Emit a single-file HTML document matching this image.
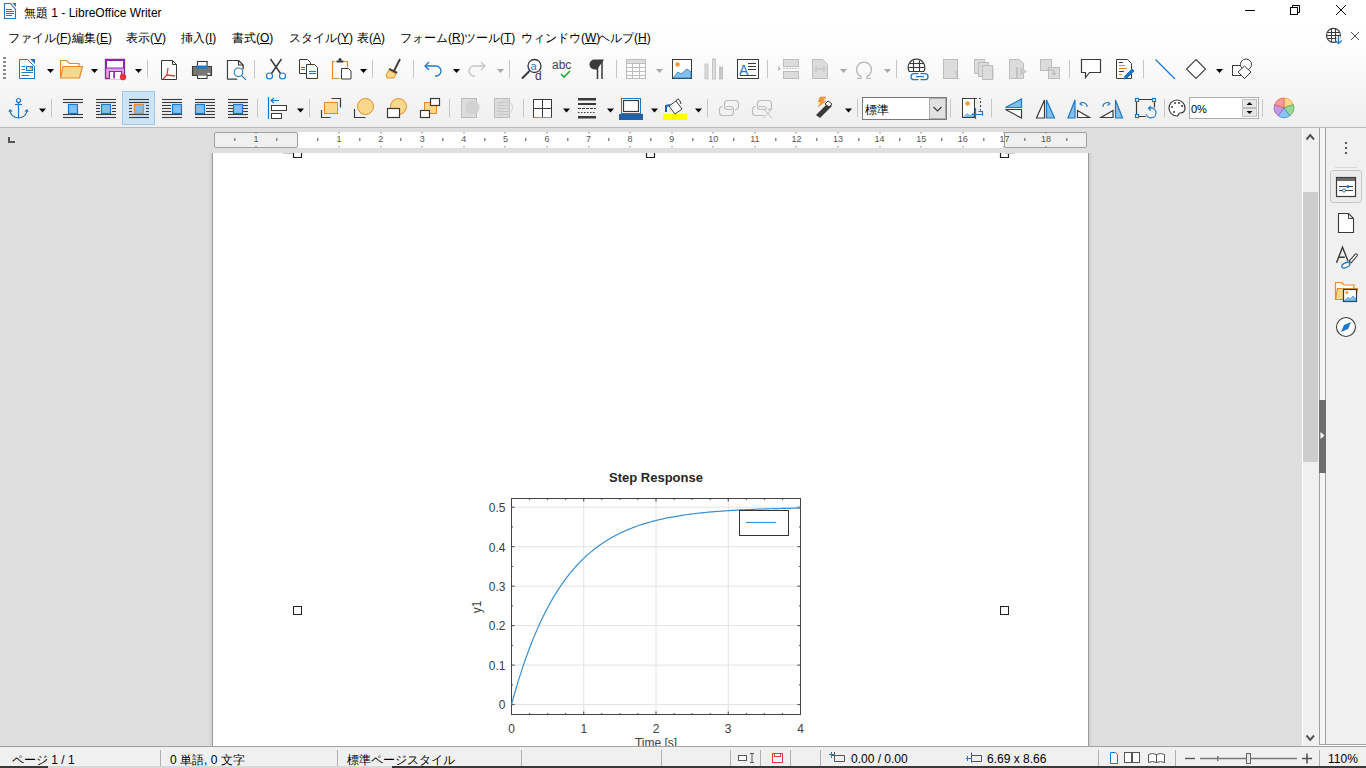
<!DOCTYPE html>
<html><head><meta charset="utf-8"><title>LibreOffice Writer</title>
<style>
html,body{margin:0;padding:0;width:1366px;height:768px;overflow:hidden;background:#fff;font-family:"Liberation Sans",sans-serif}
.bg{position:absolute}
u{text-decoration:underline;text-underline-offset:1px}
</style></head><body>
<div class="bg" style="left:0;top:0;width:1366px;height:24px;background:#fff"></div>
<div class="bg" style="left:0;top:24px;width:1366px;height:103px;background:linear-gradient(#ffffff 0px,#fdfdfd 26px,#efefef 103px)"></div>
<div class="bg" style="left:0;top:128px;width:1302px;height:618px;background:#dfdfdf"></div>
<svg width="1366" height="768" style="position:absolute;left:0;top:0" shape-rendering="geometricPrecision"><path d="M4.5,3.5 h6 l5,6 v9 h-11 z" fill="#fff" stroke="#1e78c8" stroke-width="1.1" /><path d="M12.3,3 h3.7 v4 z" fill="#1e78c8" /><line x1="6" y1="9.5" x2="12" y2="9.5" stroke="#1e78c8" stroke-width="1" /><line x1="6" y1="11.5" x2="14" y2="11.5" stroke="#1e78c8" stroke-width="1" /><line x1="6" y1="13.5" x2="14" y2="13.5" stroke="#1e78c8" stroke-width="1" /><line x1="6" y1="15.5" x2="12" y2="15.5" stroke="#1e78c8" stroke-width="1" /><line x1="1245" y1="10.5" x2="1255" y2="10.5" stroke="#000" stroke-width="1" /><rect x="1290.5" y="7.5" width="7" height="7" fill="none" stroke="#000" stroke-width="1" /><path d="M1292.5,7.5 v-2 h7 v7 h-2" fill="none" stroke="#000" stroke-width="1" /><line x1="1336" y1="5" x2="1346" y2="15" stroke="#000" stroke-width="1" /><line x1="1346" y1="5" x2="1336" y2="15" stroke="#000" stroke-width="1" /><circle cx="1333.5" cy="35.4" r="7" fill="none" stroke="#3a3a38" stroke-width="1.2"/><line x1="1331.5" y1="28.5" x2="1331.5" y2="42.5" stroke="#3a3a38" stroke-width="1" /><line x1="1335.5" y1="28.5" x2="1335.5" y2="42.5" stroke="#3a3a38" stroke-width="1" /><line x1="1327" y1="32.5" x2="1340" y2="32.5" stroke="#3a3a38" stroke-width="1" /><line x1="1326.5" y1="35.5" x2="1340.5" y2="35.5" stroke="#3a3a38" stroke-width="1" /><line x1="1327" y1="38.5" x2="1340" y2="38.5" stroke="#3a3a38" stroke-width="1" /><rect x="1336.5" y="36" width="4" height="8" fill="#fdfdfd" /><path d="M1338.5,36 v7.5 M1335.3,40.5 l3.2,3.2 l3.2,-3.2" fill="none" stroke="#1e78c8" stroke-width="1.3" /><line x1="1351" y1="32" x2="1359" y2="40" stroke="#555" stroke-width="1" /><line x1="1359" y1="32" x2="1351" y2="40" stroke="#555" stroke-width="1" /><rect x="3" y="57" width="3" height="2" fill="#8a8a8a" /><rect x="3" y="61" width="3" height="2" fill="#8a8a8a" /><rect x="3" y="65" width="3" height="2" fill="#8a8a8a" /><rect x="3" y="69" width="3" height="2" fill="#8a8a8a" /><rect x="3" y="73" width="3" height="2" fill="#8a8a8a" /><rect x="3" y="77" width="3" height="2" fill="#8a8a8a" /><path d="M19.5,59.5 h8 l7,7 v12 h-15 z" fill="#fff" stroke="#1e78c8" stroke-width="1" /><path d="M30,59 h5 v5 z" fill="#1e78c8" /><line x1="21.5" y1="66.5" x2="25" y2="66.5" stroke="#1e78c8" stroke-width="1" /><line x1="21.5" y1="69.5" x2="25" y2="69.5" stroke="#1e78c8" stroke-width="1" /><line x1="21.5" y1="72.5" x2="33" y2="72.5" stroke="#1e78c8" stroke-width="1" /><line x1="21.5" y1="75.5" x2="29" y2="75.5" stroke="#1e78c8" stroke-width="1" /><rect x="26.5" y="66.5" width="6" height="4" fill="#cfe3f5" stroke="#1e78c8" stroke-width="1" /><rect x="30" y="67" width="2" height="2" fill="#f39a3a" /><path d="M47.0,69 h7 l-3.5,4 z" fill="#000" /><path d="M60.5,78 v-17.5 h6 l3,3 h9.5 v3" fill="#fff" stroke="#e8892b" stroke-width="1.2" /><path d="M60.5,78 l2.5,-11.5 h19.5 l-3,11.5 z" fill="#f8d98c" stroke="#e8892b" stroke-width="1.2" /><path d="M91.0,69 h7 l-3.5,4 z" fill="#000" /><path d="M105.5,59.5 h19 v19 h-19 z" fill="#dca4e8" stroke="#8e24aa" stroke-width="1.3" /><rect x="106.5" y="60.5" width="17" height="7.5" fill="#fff" stroke="#8e24aa" stroke-width="1" /><path d="M109.5,79 v-7.5 h12 v7.5" fill="#fff" stroke="#8e24aa" stroke-width="1.2" /><rect x="113.3" y="72" width="1.6" height="6.5" fill="#8e24aa" /><circle cx="123" cy="77" r="3.2" fill="#e8323c"/><path d="M135.0,69 h7 l-3.5,4 z" fill="#000" /><rect x="147" y="60" width="1" height="18" fill="#c6c6c6" /><path d="M161.5,60.5 h11 l4,4 v15 h-15 z" fill="#fff" stroke="#3a3a38" stroke-width="1" /><path d="M172.5,60.5 v4 h4" fill="none" stroke="#3a3a38" stroke-width="1" /><path d="M168,68 l-1,7 l-4,4 m4,-4 l8,1" fill="none" stroke="#e03c3c" stroke-width="1.3" /><rect x="197.5" y="61.5" width="9.5" height="6" fill="#fff" stroke="#3a3a38" stroke-width="1.1" /><path d="M192.5,66.5 h19 v9 h-19 z" fill="#7a7773" stroke="#3a3a38" stroke-width="1.1" /><rect x="196.5" y="65" width="11" height="3.8" fill="#1e78c8" /><rect x="197" y="61.5" width="10.5" height="4" fill="#fff" /><path d="M197.5,65.5 v-4 h9.5 v4" fill="none" stroke="#3a3a38" stroke-width="1.1" /><rect x="207.5" y="73" width="2.5" height="1.5" fill="#fff" /><path d="M197.5,75.5 v3 h9.5 v-3" fill="#fff" stroke="#3a3a38" stroke-width="1.1" /><path d="M227.5,60.5 h11 l4.5,4.5 v4 M227.5,60.5 v18.5 h10" fill="#fff" stroke="#3a3a38" stroke-width="1.1" /><path d="M227.5,60.5 h11 l4.5,4.5 v14 h-15.5 z" fill="#fff" /><path d="M227.5,79 v-18.5 h11 l4.5,4.5 v4.5 M237,79 h-9.5" fill="none" stroke="#3a3a38" stroke-width="1.1" /><path d="M238.5,60.5 v4.5 h4.5" fill="none" stroke="#3a3a38" stroke-width="1.1" /><circle cx="238.5" cy="72.3" r="4.3" fill="none" stroke="#1e78c8" stroke-width="1.1"/><line x1="241.5" y1="75.5" x2="246" y2="79.8" stroke="#1e78c8" stroke-width="1.1" /><rect x="254" y="60" width="1" height="18" fill="#c6c6c6" /><line x1="270.5" y1="59" x2="280.5" y2="73.5" stroke="#3a3a38" stroke-width="1.5" /><line x1="281.5" y1="59" x2="271.5" y2="73.5" stroke="#3a3a38" stroke-width="1.5" /><circle cx="269.5" cy="76" r="3" fill="#fff" stroke="#1e78c8" stroke-width="1.2"/><circle cx="282.5" cy="76" r="3" fill="#fff" stroke="#1e78c8" stroke-width="1.2"/><path d="M299.5,59.5 h8 l3,3 v11 h-11 z" fill="#fff" stroke="#3a3a38" stroke-width="1" /><path d="M306.5,64.5 h8 l3,3 v11 h-11 z" fill="#fff" stroke="#3a3a38" stroke-width="1" /><line x1="301" y1="67.5" x2="305" y2="67.5" stroke="#1e78c8" stroke-width="1" /><line x1="301" y1="69.5" x2="305" y2="69.5" stroke="#1e78c8" stroke-width="1" /><line x1="309" y1="71.5" x2="316" y2="71.5" stroke="#1e78c8" stroke-width="1" /><line x1="309" y1="73.5" x2="316" y2="73.5" stroke="#1e78c8" stroke-width="1" /><path d="M335,61.5 h-2.5 v17 h7" fill="none" stroke="#e8892b" stroke-width="1.2" /><path d="M344,61.5 h3.5 v6" fill="none" stroke="#e8892b" stroke-width="1.2" /><rect x="336.5" y="60.5" width="7" height="2" fill="#3a3a38" /><circle cx="340" cy="59.5" r="1.5" fill="#3a3a38"/><path d="M341.5,68.5 h7 l2.5,2.5 v8 h-9.5 z" fill="#fff" stroke="#3a3a38" stroke-width="1" /><path d="M360.0,69 h7 l-3.5,4 z" fill="#000" /><rect x="372" y="60" width="1" height="18" fill="#c6c6c6" /><line x1="393" y1="73" x2="400" y2="59" stroke="#3a3a38" stroke-width="1.8" /><path d="M389,69 l8,4" fill="none" stroke="#3a3a38" stroke-width="2.5" /><path d="M386,75 l3,-5 l7,4 l-2,4 h-7 z" fill="#f8d98c" stroke="#e8892b" stroke-width="1" /><rect x="413" y="60" width="1" height="18" fill="#c6c6c6" /><path d="M425,66 h11 a5,5 0 0 1 0,10 h-1" fill="none" stroke="#1e78c8" stroke-width="1.3" /><path d="M429,62 l-4,4 l4,4" fill="none" stroke="#1e78c8" stroke-width="1.3" /><path d="M453.0,69 h7 l-3.5,4 z" fill="#000" /><path d="M485,66 h-11 a5,5 0 0 0 0,10 h1" fill="none" stroke="#c4c4c4" stroke-width="1.3" /><path d="M481,62 l4,4 l-4,4" fill="none" stroke="#c4c4c4" stroke-width="1.3" /><path d="M497.0,69 h7 l-3.5,4 z" fill="#a9a9a9" /><rect x="509" y="60" width="1" height="18" fill="#c6c6c6" /><circle cx="534.5" cy="66" r="6.5" fill="#fff" stroke="#3a3a38" stroke-width="1.3"/><line x1="529.5" y1="71" x2="522" y2="78.5" stroke="#3a3a38" stroke-width="2" /><path d="M561,74 l3,3 l6,-6" fill="none" stroke="#22a83c" stroke-width="1.6" /><path d="M597.5,60 v19 M602,60 v19" fill="none" stroke="#3a3a38" stroke-width="1.5" /><path d="M604,59.5 h-9.5 a5,5 0 0 0 0,10 h2.5 z" fill="#3a3a38" /><rect x="616" y="60" width="1" height="18" fill="#c6c6c6" /><rect x="626.5" y="59.5" width="19" height="19" fill="#fff" stroke="#bdbdbd" stroke-width="1" /><rect x="627" y="60" width="18" height="3" fill="#dcdcdc" /><line x1="627" y1="63.5" x2="645" y2="63.5" stroke="#bdbdbd" stroke-width="1" /><line x1="627" y1="67.5" x2="645" y2="67.5" stroke="#bdbdbd" stroke-width="1" /><line x1="627" y1="71.5" x2="645" y2="71.5" stroke="#bdbdbd" stroke-width="1" /><line x1="627" y1="75.5" x2="645" y2="75.5" stroke="#bdbdbd" stroke-width="1" /><line x1="632.5" y1="63" x2="632.5" y2="78" stroke="#bdbdbd" stroke-width="1" /><line x1="639.5" y1="63" x2="639.5" y2="78" stroke="#bdbdbd" stroke-width="1" /><path d="M656.0,69 h7 l-3.5,4 z" fill="#a9a9a9" /><rect x="672.5" y="59.5" width="19" height="19" fill="#fff" stroke="#3a3a38" stroke-width="1" /><circle cx="677.5" cy="64.5" r="2.3" fill="#f39a3a"/><path d="M673,78 l5,-6 l3,2 l6,-5 l4,3 v6 z" fill="#83beec" stroke="#1e78c8" stroke-width="0.8" /><rect x="705" y="64" width="3" height="15" fill="#dcdcdc" stroke="#bdbdbd" stroke-width="0.8" /><rect x="712.5" y="59" width="3" height="20" fill="#dcdcdc" stroke="#bdbdbd" stroke-width="0.8" /><rect x="719.5" y="67" width="3" height="12" fill="#c8c8c8" stroke="#bdbdbd" stroke-width="0.8" /><rect x="737.5" y="59.5" width="21" height="19" fill="#fff" stroke="#3a3a38" stroke-width="1" /><line x1="748" y1="63.5" x2="756" y2="63.5" stroke="#3a3a38" stroke-width="1" /><line x1="748" y1="66.5" x2="756" y2="66.5" stroke="#3a3a38" stroke-width="1" /><line x1="748" y1="69.5" x2="756" y2="69.5" stroke="#3a3a38" stroke-width="1" /><line x1="740" y1="75.5" x2="756" y2="75.5" stroke="#3a3a38" stroke-width="1" /><rect x="767" y="60" width="1" height="18" fill="#c6c6c6" /><rect x="783.5" y="59.5" width="15" height="7" fill="#dcdcdc" stroke="#bdbdbd" stroke-width="1" /><rect x="783.5" y="71.5" width="15" height="7" fill="#dcdcdc" stroke="#bdbdbd" stroke-width="1" /><path d="M778,66 l3,2.5 l-3,2.5 z" fill="#bdbdbd" /><line x1="783" y1="68.5" x2="799" y2="68.5" stroke="#bdbdbd" stroke-width="1" stroke-dasharray="2,1"/><path d="M812.5,59.5 h10 l5,5 v14 h-15 z" fill="#dcdcdc" stroke="#bdbdbd" stroke-width="1" /><path d="M816,66 v6 M824,66 v6 M817,69 h6" fill="none" stroke="#bdbdbd" stroke-width="1" /><path d="M840.0,69 h7 l-3.5,4 z" fill="#a9a9a9" /><path d="M857,78.5 h4 v-2 a7.5,7.5 0 1 1 6,0 v2 h4" fill="none" stroke="#b5b5b5" stroke-width="1.2" /><path d="M884.0,69 h7 l-3.5,4 z" fill="#a9a9a9" /><rect x="896" y="60" width="1" height="18" fill="#c6c6c6" /><path d="M909.3,71.5 A8.3,8.3 0 1 1 923.7,71.5 Z" fill="#fff" stroke="#3a3a38" stroke-width="1.2" /><line x1="913.5" y1="60.5" x2="913.5" y2="71.5" stroke="#3a3a38" stroke-width="1.1" /><line x1="919.5" y1="60.5" x2="919.5" y2="71.5" stroke="#3a3a38" stroke-width="1.1" /><line x1="909.5" y1="63.5" x2="923.5" y2="63.5" stroke="#3a3a38" stroke-width="1.1" /><line x1="908.5" y1="67.5" x2="924.5" y2="67.5" stroke="#3a3a38" stroke-width="1.1" /><path d="M918.5,73.7 h-4.5 a3,3 0 0 0 0,6 h4.5 M920.5,73.7 h4.5 a3,3 0 0 1 0,6 h-4.5 M916,76.7 h8" fill="none" stroke="#1e78c8" stroke-width="1.3" /><rect x="943.5" y="59.5" width="14" height="19" fill="#dcdcdc" stroke="#bdbdbd" stroke-width="1" /><rect x="974.5" y="59.5" width="10" height="14" fill="#dcdcdc" stroke="#bdbdbd" stroke-width="1" /><rect x="978.5" y="62.5" width="10" height="14" fill="#dcdcdc" stroke="#bdbdbd" stroke-width="1" /><rect x="982.5" y="65.5" width="10" height="14" fill="#dcdcdc" stroke="#bdbdbd" stroke-width="1" /><rect x="992" y="68" width="1.5" height="11" fill="#bdbdbd" /><path d="M1009.5,59.5 h10 l4,4 v15 h-14 z" fill="#dcdcdc" stroke="#bdbdbd" stroke-width="1" /><rect x="1016" y="67" width="2" height="12" fill="#c2c2c2" /><path d="M1020,67 l7,4.5 l-7,4.5 z" fill="#c8c8c8" /><rect x="1040.5" y="59.5" width="11" height="11" fill="#dcdcdc" stroke="#bdbdbd" stroke-width="1" /><rect x="1048.5" y="67.5" width="11" height="11" fill="#dcdcdc" stroke="#bdbdbd" stroke-width="1" /><path d="M1047,70 h7 v5 m-2,-2 l2,2 l2,-2" fill="none" stroke="#b0b0b0" stroke-width="1" /><rect x="1069" y="60" width="1" height="18" fill="#c6c6c6" /><path d="M1081.5,59.5 h19 v13 h-11 l-4,5 v-5 h-4 z" fill="#fff" stroke="#3a3a38" stroke-width="1.2" /><path d="M1116.5,59.5 h11 l4,4 v15 h-15 z" fill="#fff" stroke="#3a3a38" stroke-width="1" /><line x1="1119" y1="62.5" x2="1123" y2="62.5" stroke="#3a3a38" stroke-width="1" /><line x1="1119" y1="65.5" x2="1125" y2="65.5" stroke="#e8892b" stroke-width="1" /><line x1="1119" y1="68.5" x2="1127" y2="68.5" stroke="#e8892b" stroke-width="1" /><line x1="1119" y1="71.5" x2="1124" y2="71.5" stroke="#3a3a38" stroke-width="1" /><line x1="1119" y1="74.5" x2="1122" y2="74.5" stroke="#e8892b" stroke-width="1" /><path d="M1124,79 l1,-3 l7,-7 l2,2 l-7,7 z" fill="#1e78c8" stroke="#1e78c8" stroke-width="1" /><rect x="1143" y="60" width="1" height="18" fill="#c6c6c6" /><line x1="1155.5" y1="59.5" x2="1175" y2="79" stroke="#1e78c8" stroke-width="1.3" /><path d="M1196,59.5 l9.5,9.5 l-9.5,9.5 l-9.5,-9.5 z" fill="#fff" stroke="#4a4a4a" stroke-width="1.2" /><path d="M1216.0,69 h7 l-3.5,4 z" fill="#000" /><rect x="1232.5" y="65.5" width="11" height="10" fill="#fff" stroke="#3a3a38" stroke-width="1" /><circle cx="1246" cy="64.5" r="5.5" fill="#fff" stroke="#3a3a38"/><path d="M1244.5,66 l6.5,6 l-6.5,6.5 l-6.5,-6.5 z" fill="#fff" stroke="#3a3a38" stroke-width="1" /><circle cx="18.5" cy="100.5" r="2" fill="none" stroke="#1e78c8" stroke-width="1.2"/><line x1="18.5" y1="102.5" x2="18.5" y2="118" stroke="#1e78c8" stroke-width="1.2" /><line x1="15" y1="104.5" x2="22" y2="104.5" stroke="#1e78c8" stroke-width="1.2" /><path d="M10,111 q1,6 8.5,7 q7.5,-1 8.5,-7" fill="none" stroke="#1e78c8" stroke-width="1.2" /><path d="M9,112 l1,-2 l2,1.5 M28,112 l-1,-2 l-2,1.5" fill="none" stroke="#1e78c8" stroke-width="1.2" /><path d="M39.0,108.5 h7 l-3.5,4 z" fill="#000" /><rect x="51" y="99" width="1" height="18" fill="#c6c6c6" /><line x1="63" y1="99.5" x2="83" y2="99.5" stroke="#3a3a38" stroke-width="1.1" /><line x1="63" y1="102.5" x2="83" y2="102.5" stroke="#3a3a38" stroke-width="1.1" /><line x1="63" y1="114.5" x2="83" y2="114.5" stroke="#3a3a38" stroke-width="1.1" /><line x1="63" y1="117.5" x2="83" y2="117.5" stroke="#3a3a38" stroke-width="1.1" /><rect x="68.5" y="104.5" width="9" height="9" fill="#83beec" stroke="#1e78c8" stroke-width="1.2" /><line x1="96" y1="99.5" x2="116" y2="99.5" stroke="#3a3a38" stroke-width="1.1" /><line x1="96" y1="102.5" x2="116" y2="102.5" stroke="#3a3a38" stroke-width="1.1" /><line x1="96" y1="105.5" x2="100" y2="105.5" stroke="#3a3a38" stroke-width="1.1" /><line x1="112" y1="105.5" x2="116" y2="105.5" stroke="#3a3a38" stroke-width="1.1" /><line x1="96" y1="108.5" x2="100" y2="108.5" stroke="#3a3a38" stroke-width="1.1" /><line x1="112" y1="108.5" x2="116" y2="108.5" stroke="#3a3a38" stroke-width="1.1" /><line x1="96" y1="111.5" x2="100" y2="111.5" stroke="#3a3a38" stroke-width="1.1" /><line x1="112" y1="111.5" x2="116" y2="111.5" stroke="#3a3a38" stroke-width="1.1" /><line x1="96" y1="114.5" x2="116" y2="114.5" stroke="#3a3a38" stroke-width="1.1" /><line x1="96" y1="117.5" x2="116" y2="117.5" stroke="#3a3a38" stroke-width="1.1" /><rect x="101.5" y="104.5" width="9" height="9" fill="#83beec" stroke="#1e78c8" stroke-width="1.2" /><rect x="122.5" y="91.5" width="32" height="33" fill="#cce4f7" stroke="#99c9ef" stroke-width="1" /><line x1="129" y1="99.5" x2="149" y2="99.5" stroke="#3a3a38" stroke-width="1.1" /><line x1="129" y1="102.5" x2="149" y2="102.5" stroke="#3a3a38" stroke-width="1.1" /><line x1="129" y1="105.5" x2="132" y2="105.5" stroke="#3a3a38" stroke-width="1.1" /><line x1="146" y1="105.5" x2="149" y2="105.5" stroke="#3a3a38" stroke-width="1.1" /><line x1="129" y1="108.5" x2="132" y2="108.5" stroke="#3a3a38" stroke-width="1.1" /><line x1="146" y1="108.5" x2="149" y2="108.5" stroke="#3a3a38" stroke-width="1.1" /><line x1="129" y1="111.5" x2="132" y2="111.5" stroke="#3a3a38" stroke-width="1.1" /><line x1="146" y1="111.5" x2="149" y2="111.5" stroke="#3a3a38" stroke-width="1.1" /><line x1="129" y1="114.5" x2="149" y2="114.5" stroke="#3a3a38" stroke-width="1.1" /><line x1="129" y1="117.5" x2="149" y2="117.5" stroke="#3a3a38" stroke-width="1.1" /><rect x="134.5" y="104.5" width="9" height="9" fill="#83beec" stroke="#e8892b" stroke-width="1.2" /><line x1="162" y1="99.5" x2="182" y2="99.5" stroke="#3a3a38" stroke-width="1.1" /><line x1="162" y1="102.5" x2="182" y2="102.5" stroke="#3a3a38" stroke-width="1.1" /><line x1="162" y1="105.5" x2="171" y2="105.5" stroke="#3a3a38" stroke-width="1.1" /><line x1="162" y1="108.5" x2="171" y2="108.5" stroke="#3a3a38" stroke-width="1.1" /><line x1="162" y1="111.5" x2="171" y2="111.5" stroke="#3a3a38" stroke-width="1.1" /><line x1="162" y1="114.5" x2="182" y2="114.5" stroke="#3a3a38" stroke-width="1.1" /><line x1="162" y1="117.5" x2="182" y2="117.5" stroke="#3a3a38" stroke-width="1.1" /><rect x="172.5" y="104.5" width="9" height="9" fill="#83beec" stroke="#1e78c8" stroke-width="1.2" /><line x1="195" y1="99.5" x2="215" y2="99.5" stroke="#3a3a38" stroke-width="1.1" /><line x1="195" y1="102.5" x2="215" y2="102.5" stroke="#3a3a38" stroke-width="1.1" /><line x1="206" y1="105.5" x2="215" y2="105.5" stroke="#3a3a38" stroke-width="1.1" /><line x1="206" y1="108.5" x2="215" y2="108.5" stroke="#3a3a38" stroke-width="1.1" /><line x1="206" y1="111.5" x2="215" y2="111.5" stroke="#3a3a38" stroke-width="1.1" /><line x1="195" y1="114.5" x2="215" y2="114.5" stroke="#3a3a38" stroke-width="1.1" /><line x1="195" y1="117.5" x2="215" y2="117.5" stroke="#3a3a38" stroke-width="1.1" /><rect x="195.5" y="104.5" width="9" height="9" fill="#83beec" stroke="#1e78c8" stroke-width="1.2" /><line x1="228" y1="99.5" x2="248" y2="99.5" stroke="#3a3a38" stroke-width="1.1" /><line x1="228" y1="102.5" x2="248" y2="102.5" stroke="#3a3a38" stroke-width="1.1" /><line x1="228" y1="105.5" x2="248" y2="105.5" stroke="#3a3a38" stroke-width="1.1" /><line x1="228" y1="108.5" x2="248" y2="108.5" stroke="#3a3a38" stroke-width="1.1" /><line x1="228" y1="111.5" x2="248" y2="111.5" stroke="#3a3a38" stroke-width="1.1" /><line x1="228" y1="114.5" x2="248" y2="114.5" stroke="#3a3a38" stroke-width="1.1" /><line x1="228" y1="117.5" x2="248" y2="117.5" stroke="#3a3a38" stroke-width="1.1" /><rect x="233.5" y="104.5" width="9" height="9" fill="#83beec" stroke="#1e78c8" stroke-width="1.2" /><rect x="257" y="99" width="1" height="18" fill="#c6c6c6" /><line x1="268.5" y1="97" x2="268.5" y2="119" stroke="#1e78c8" stroke-width="1.2" /><path d="M271,100.5 h8 M274,98 l-3,2.5 l3,2.5" fill="none" stroke="#1e78c8" stroke-width="1.1" /><rect x="271.5" y="105.5" width="15" height="5" fill="#fff" stroke="#3a3a38" stroke-width="1" /><rect x="271.5" y="113.5" width="10" height="5" fill="#fff" stroke="#3a3a38" stroke-width="1" /><path d="M297.0,108.5 h7 l-3.5,4 z" fill="#000" /><rect x="309" y="99" width="1" height="18" fill="#c6c6c6" /><path d="M331.5,98.5 h9 v9" fill="none" stroke="#3a3a38" stroke-width="1.2" /><path d="M321.5,110 v7.5 h9" fill="none" stroke="#3a3a38" stroke-width="1.2" /><rect x="324.5" y="102.5" width="13" height="11" fill="#f8d98c" stroke="#e8892b" stroke-width="1" /><path d="M354.5,109 v8.5 h11" fill="none" stroke="#3a3a38" stroke-width="1.2" /><circle cx="365.5" cy="106.5" r="8" fill="#f8d98c" stroke="#e8892b"/><circle cx="398.5" cy="106.5" r="8" fill="#f8d98c" stroke="#e8892b"/><rect x="387.5" y="108.5" width="12" height="9" fill="#fff" stroke="#3a3a38" stroke-width="1.2" /><rect x="424.5" y="102.5" width="12" height="11" fill="#f8d98c" stroke="#e8892b" stroke-width="1" /><rect x="430.5" y="98.5" width="9" height="7" fill="#fff" stroke="#3a3a38" stroke-width="1.2" /><rect x="420.5" y="110.5" width="9" height="7" fill="#fff" stroke="#3a3a38" stroke-width="1.2" /><rect x="449" y="99" width="1" height="18" fill="#c6c6c6" /><rect x="461.5" y="98.5" width="15" height="19" fill="#dcdcdc" stroke="#bdbdbd" stroke-width="1" /><circle cx="472.5" cy="107.5" r="7" fill="#d2d2d2"/><rect x="494.5" y="98.5" width="15" height="19" fill="#dcdcdc" stroke="#bdbdbd" stroke-width="1" /><circle cx="505.5" cy="107.5" r="7" fill="none" stroke="#cfcfcf"/><line x1="497" y1="102.5" x2="510" y2="102.5" stroke="#c9c9c9" stroke-width="1" /><line x1="497" y1="105.5" x2="510" y2="105.5" stroke="#c9c9c9" stroke-width="1" /><line x1="497" y1="108.5" x2="510" y2="108.5" stroke="#c9c9c9" stroke-width="1" /><line x1="497" y1="111.5" x2="510" y2="111.5" stroke="#c9c9c9" stroke-width="1" /><line x1="497" y1="114.5" x2="510" y2="114.5" stroke="#c9c9c9" stroke-width="1" /><rect x="523" y="99" width="1" height="18" fill="#c6c6c6" /><rect x="533.5" y="99.5" width="18" height="18" fill="#fff" stroke="#3a3a38" stroke-width="1" /><line x1="542.5" y1="99.5" x2="542.5" y2="117.5" stroke="#3a3a38" stroke-width="1" /><line x1="533.5" y1="108.5" x2="551.5" y2="108.5" stroke="#3a3a38" stroke-width="1" /><line x1="533.5" y1="117.5" x2="551.5" y2="117.5" stroke="#e8892b" stroke-width="1.2" /><path d="M563.0,108.5 h7 l-3.5,4 z" fill="#000" /><rect x="578" y="98" width="18" height="2.5" fill="#3a3a38" /><rect x="578" y="103" width="18" height="2" fill="#3a3a38" /><line x1="578" y1="108.5" x2="596" y2="108.5" stroke="#3a3a38" stroke-width="1" stroke-dasharray="3,1"/><line x1="578" y1="112.5" x2="596" y2="112.5" stroke="#3a3a38" stroke-width="1" stroke-dasharray="1.5,1.5"/><rect x="578" y="116" width="18" height="2.5" fill="#3a3a38" /><path d="M607.0,108.5 h7 l-3.5,4 z" fill="#000" /><rect x="621.5" y="98.5" width="19" height="15" fill="#fff" stroke="#1e78c8" stroke-width="1" /><rect x="623.5" y="100.5" width="15" height="11" fill="#fff" stroke="#3a3a38" stroke-width="1.2" /><rect x="619" y="114" width="24" height="6" fill="#2a5f9e" /><path d="M651.0,108.5 h7 l-3.5,4 z" fill="#000" /><rect x="663" y="114" width="24" height="6" fill="#ffff00" /><path d="M669,106 l7,-5 l6,8 l-7,5 z" fill="#fff" stroke="#3a3a38" stroke-width="1" /><path d="M666,112 v-6 l4,-1" fill="none" stroke="#1e5fb0" stroke-width="2" /><path d="M676,101 q2,-4 4,0 l1,3" fill="none" stroke="#3a3a38" stroke-width="1" /><path d="M695.0,108.5 h7 l-3.5,4 z" fill="#000" /><rect x="707" y="99" width="1" height="18" fill="#c6c6c6" /><path d="M735,109.5 A3,3 0 0 0 738.5,106.5 V103.5 A3,3 0 0 0 735.5,100.5 H727.5 A3,3 0 0 0 724.5,103.5 V106.5 A3,3 0 0 0 727.5,109.5 H732.5" fill="none" stroke="#bdbdbd" stroke-width="1.2" /><path d="M726,106.5 H730.5 A3,3 0 0 1 733.5,109.5 V112.5 A3,3 0 0 1 730.5,115.5 H722.5 A3,3 0 0 1 719.5,112.5 V109.5 A3,3 0 0 1 722.5,106.5" fill="none" stroke="#bdbdbd" stroke-width="1.2" /><path d="M768,109.5 A3,3 0 0 0 771.5,106.5 V103.5 A3,3 0 0 0 768.5,100.5 H760.5 A3,3 0 0 0 757.5,103.5 V106.5 A3,3 0 0 0 760.5,109.5 H765.5" fill="none" stroke="#bdbdbd" stroke-width="1.2" /><path d="M759,106.5 H763.5 A3,3 0 0 1 766.5,109.5 M764,115.5 H755.5 A3,3 0 0 1 752.5,112.5 V109.5 A3,3 0 0 1 755.5,106.5" fill="none" stroke="#bdbdbd" stroke-width="1.2" /><line x1="763" y1="108.5" x2="772.5" y2="118.5" stroke="#bdbdbd" stroke-width="1" /><line x1="772.5" y1="108.5" x2="763" y2="118.5" stroke="#bdbdbd" stroke-width="1" /><path d="M816,115 l12,-12 l4,3 l-12,12 z" fill="#3a3a38" /><path d="M825,104 l3,-3 l4,3 l-3,3 z" fill="#fff" stroke="#3a3a38" stroke-width="1" /><path d="M820,97 h6 l-3,4 h3 l-8,6 l3,-5 h-3 z" fill="#f39a3a" stroke="#e8892b" stroke-width="0.5" /><path d="M845.0,108.5 h7 l-3.5,4 z" fill="#000" /><rect x="857" y="99" width="1" height="18" fill="#c6c6c6" /><rect x="862.5" y="97.5" width="84" height="22" fill="#fff" stroke="#7a7a7a" stroke-width="1" /><rect x="929.5" y="98.5" width="16" height="20" fill="#e1e1e1" stroke="#adadad" stroke-width="1" /><path d="M933.5,107 l4,4 l4,-4" fill="none" stroke="#3a3a3a" stroke-width="1.2" /><rect x="950" y="99" width="1" height="18" fill="#c6c6c6" /><rect x="962.5" y="98.5" width="12" height="19" fill="#fff" stroke="#3a3a38" stroke-width="1" /><path d="M975,98.5 h5.5 v12" fill="none" stroke="#3a3a38" stroke-width="1" stroke-dasharray="2,2"/><circle cx="967.5" cy="103.5" r="2.3" fill="#f39a3a"/><path d="M963,117 l4,-4 l3,2 l4,-3 v5 z" fill="#83beec" /><path d="M975.5,108 v11 M972,114.5 h11 M978.5,111.5 h4 v4" fill="none" stroke="#1e78c8" stroke-width="1.2" /><rect x="991" y="99" width="1" height="18" fill="#c6c6c6" /><path d="M1021.5,99 v8.5 h-16 z" fill="#83beec" stroke="#1e78c8" stroke-width="1.2" /><path d="M1021.5,118 v-8.5 h-16 z" fill="#fff" stroke="#3a3a38" stroke-width="1.2" /><path d="M1044.5,100 v18 h-8 z" fill="#fff" stroke="#3a3a38" stroke-width="1.2" /><path d="M1046.5,100 v18 h8 z" fill="#83beec" stroke="#1e78c8" stroke-width="1.2" /><path d="M1075,100 v18 h-7 z" fill="#83beec" stroke="#1e78c8" stroke-width="1.2" /><path d="M1077.5,117.5 v-7 l12,7 z" fill="#fff" stroke="#3a3a38" stroke-width="1.2" /><path d="M1080,104 a4,4 0 0 1 7,3 M1082,102 l-2,2 l2.5,1.5" fill="none" stroke="#1e78c8" stroke-width="1.1" /><path d="M1115.5,100 v18 h7 z" fill="#83beec" stroke="#1e78c8" stroke-width="1.2" /><path d="M1113,117.5 v-7 l-12,7 z" fill="#fff" stroke="#3a3a38" stroke-width="1.2" /><path d="M1110,104 a4,4 0 0 0 -7,3 M1108,102 l2,2 l-2.5,1.5" fill="none" stroke="#1e78c8" stroke-width="1.1" /><path d="M1145.75,116.5 h-9.25 v-17 h18 v8" fill="none" stroke="#3a3a38" stroke-width="1.2" /><rect x="1135.5" y="98.5" width="3" height="3" fill="#fff" stroke="#1e78c8" stroke-width="1.2" /><rect x="1152.5" y="98.5" width="3" height="3" fill="#fff" stroke="#1e78c8" stroke-width="1.2" /><rect x="1135.5" y="114.5" width="3" height="3" fill="#fff" stroke="#1e78c8" stroke-width="1.2" /><path d="M1146.2,114.1 A5,5 0 1 0 1151,107.8 L1148.5,108.3 M1150.8,105.8 L1148.5,108.3 L1150.8,110.8" fill="none" stroke="#1e78c8" stroke-width="1.2" /><rect x="1164" y="99" width="1" height="18" fill="#c6c6c6" /><path d="M1177,100 a8,8 0 1 0 0,16 c2,0 1,-3 3,-3 c3,0 5,-2 5,-5 a8,8 0 0 0 -8,-8 z" fill="#fff" stroke="#3a3a38" stroke-width="1.2" /><circle cx="1172" cy="107" r="1" fill="#3a3a38"/><circle cx="1175" cy="103" r="1" fill="#3a3a38"/><circle cx="1179" cy="103" r="1" fill="#3a3a38"/><circle cx="1182" cy="106" r="1" fill="#3a3a38"/><circle cx="1174" cy="112" r="1" fill="#3a3a38"/><rect x="1189.5" y="97.5" width="69" height="21" fill="#fff" stroke="#adadad" stroke-width="1" /><rect x="1242.5" y="99.5" width="14" height="8" fill="#e6e6e6" stroke="#c0c0c0" stroke-width="1" /><rect x="1242.5" y="108.5" width="14" height="8" fill="#e6e6e6" stroke="#c0c0c0" stroke-width="1" /><path d="M1246.5,105 l3,-3 l3,3 z" fill="#000" /><path d="M1246.5,111 l3,3 l3,-3 z" fill="#000" /><rect x="1262" y="99" width="1" height="18" fill="#c6c6c6" /><path d="M1284,107.8 L1284.00,98.00 A9.8,9.8 0 0 1 1293.32,104.77 z" fill="#f9d68a" stroke="#eaa940" stroke-width="0.8" /><path d="M1284,107.8 L1293.32,104.77 A9.8,9.8 0 0 1 1289.76,115.73 z" fill="#9ad89a" stroke="#4ca85a" stroke-width="0.8" /><path d="M1284,107.8 L1289.76,115.73 A9.8,9.8 0 0 1 1278.24,115.73 z" fill="#8cc2f0" stroke="#3a8ad8" stroke-width="0.8" /><path d="M1284,107.8 L1278.24,115.73 A9.8,9.8 0 0 1 1274.68,104.77 z" fill="#c59ae0" stroke="#9a5ac0" stroke-width="0.8" /><path d="M1284,107.8 L1274.68,104.77 A9.8,9.8 0 0 1 1284.00,98.00 z" fill="#f39a9a" stroke="#e86060" stroke-width="0.8" /><rect x="0" y="127" width="1366" height="1" fill="#b9b9b9" /><rect x="297" y="132" width="708" height="16" fill="#fff" /><rect x="214.5" y="132.5" width="83" height="15" fill="#f0f0f0" stroke="#a0a0a0" stroke-width="1" rx="1.5"/><rect x="1004.5" y="132.5" width="82" height="15" fill="#f0f0f0" stroke="#a0a0a0" stroke-width="1" rx="1.5"/><rect x="234" y="138" width="1.5" height="3" fill="#888" /><rect x="255.5" y="132" width="1" height="1.5" fill="#777" /><rect x="255.5" y="146" width="1" height="1.5" fill="#777" /><rect x="276" y="138" width="1.5" height="3" fill="#888" /><rect x="317" y="138" width="1.5" height="3" fill="#888" /><rect x="338.5" y="132" width="1" height="1.5" fill="#777" /><rect x="338.5" y="146" width="1" height="1.5" fill="#777" /><rect x="359" y="138" width="1.5" height="3" fill="#888" /><rect x="380.5" y="132" width="1" height="1.5" fill="#777" /><rect x="380.5" y="146" width="1" height="1.5" fill="#777" /><rect x="400" y="138" width="1.5" height="3" fill="#888" /><rect x="421.5" y="132" width="1" height="1.5" fill="#777" /><rect x="421.5" y="146" width="1" height="1.5" fill="#777" /><rect x="442" y="138" width="1.5" height="3" fill="#888" /><rect x="463.5" y="132" width="1" height="1.5" fill="#777" /><rect x="463.5" y="146" width="1" height="1.5" fill="#777" /><rect x="484" y="138" width="1.5" height="3" fill="#888" /><rect x="504.5" y="132" width="1" height="1.5" fill="#777" /><rect x="504.5" y="146" width="1" height="1.5" fill="#777" /><rect x="525" y="138" width="1.5" height="3" fill="#888" /><rect x="546.5" y="132" width="1" height="1.5" fill="#777" /><rect x="546.5" y="146" width="1" height="1.5" fill="#777" /><rect x="567" y="138" width="1.5" height="3" fill="#888" /><rect x="588.5" y="132" width="1" height="1.5" fill="#777" /><rect x="588.5" y="146" width="1" height="1.5" fill="#777" /><rect x="608" y="138" width="1.5" height="3" fill="#888" /><rect x="629.5" y="132" width="1" height="1.5" fill="#777" /><rect x="629.5" y="146" width="1" height="1.5" fill="#777" /><rect x="650" y="138" width="1.5" height="3" fill="#888" /><rect x="671.5" y="132" width="1" height="1.5" fill="#777" /><rect x="671.5" y="146" width="1" height="1.5" fill="#777" /><rect x="692" y="138" width="1.5" height="3" fill="#888" /><rect x="712.5" y="132" width="1" height="1.5" fill="#777" /><rect x="712.5" y="146" width="1" height="1.5" fill="#777" /><rect x="733" y="138" width="1.5" height="3" fill="#888" /><rect x="754.5" y="132" width="1" height="1.5" fill="#777" /><rect x="754.5" y="146" width="1" height="1.5" fill="#777" /><rect x="775" y="138" width="1.5" height="3" fill="#888" /><rect x="795.5" y="132" width="1" height="1.5" fill="#777" /><rect x="795.5" y="146" width="1" height="1.5" fill="#777" /><rect x="816" y="138" width="1.5" height="3" fill="#888" /><rect x="837.5" y="132" width="1" height="1.5" fill="#777" /><rect x="837.5" y="146" width="1" height="1.5" fill="#777" /><rect x="858" y="138" width="1.5" height="3" fill="#888" /><rect x="879.5" y="132" width="1" height="1.5" fill="#777" /><rect x="879.5" y="146" width="1" height="1.5" fill="#777" /><rect x="899" y="138" width="1.5" height="3" fill="#888" /><rect x="920.5" y="132" width="1" height="1.5" fill="#777" /><rect x="920.5" y="146" width="1" height="1.5" fill="#777" /><rect x="941" y="138" width="1.5" height="3" fill="#888" /><rect x="962.5" y="132" width="1" height="1.5" fill="#777" /><rect x="962.5" y="146" width="1" height="1.5" fill="#777" /><rect x="983" y="138" width="1.5" height="3" fill="#888" /><rect x="1003.5" y="132" width="1" height="1.5" fill="#777" /><rect x="1003.5" y="146" width="1" height="1.5" fill="#777" /><rect x="1024" y="138" width="1.5" height="3" fill="#888" /><rect x="1045.5" y="132" width="1" height="1.5" fill="#777" /><rect x="1045.5" y="146" width="1" height="1.5" fill="#777" /><rect x="1066" y="138" width="1.5" height="3" fill="#888" /><path d="M9,137 v5 h6" fill="none" stroke="#555" stroke-width="2" /><defs><linearGradient id="shl" x1="0" x2="1"><stop offset="0" stop-color="#dfdfdf"/><stop offset="1" stop-color="#cfcfcf"/></linearGradient><linearGradient id="shr" x1="0" x2="1"><stop offset="0" stop-color="#cfcfcf"/><stop offset="1" stop-color="#dfdfdf"/></linearGradient></defs><rect x="208" y="153" width="4" height="593" fill="url(#shl)" /><rect x="212" y="153" width="1" height="593" fill="#9a9a9a" /><rect x="213" y="153" width="875" height="593" fill="#fff" /><rect x="1088" y="153" width="1" height="593" fill="#9a9a9a" /><rect x="1089" y="153" width="4" height="593" fill="url(#shr)" /><path d="M293.5,153 v4.5 h8 v-4.5" fill="none" stroke="#222" stroke-width="1.2" /><path d="M646.5,153 v4.5 h8 v-4.5" fill="none" stroke="#222" stroke-width="1.2" /><path d="M1000.5,153 v4.5 h8 v-4.5" fill="none" stroke="#222" stroke-width="1.2" /><rect x="293.5" y="606.5" width="8" height="8" fill="#fff" stroke="#222" stroke-width="1" /><rect x="1000.5" y="606.5" width="8" height="8" fill="#fff" stroke="#222" stroke-width="1" /><rect x="283" y="153" width="10" height="1" fill="#c8c8c8" /><rect x="1005" y="153" width="10" height="1" fill="#c8c8c8" /><line x1="583.75" y1="498.5" x2="583.75" y2="714.5" stroke="#e2e2e2" stroke-width="1" /><line x1="656.0" y1="498.5" x2="656.0" y2="714.5" stroke="#e2e2e2" stroke-width="1" /><line x1="728.25" y1="498.5" x2="728.25" y2="714.5" stroke="#e2e2e2" stroke-width="1" /><line x1="511.5" y1="704.6" x2="800.5" y2="704.6" stroke="#e2e2e2" stroke-width="1" /><line x1="511.5" y1="665.12" x2="800.5" y2="665.12" stroke="#e2e2e2" stroke-width="1" /><line x1="511.5" y1="625.64" x2="800.5" y2="625.64" stroke="#e2e2e2" stroke-width="1" /><line x1="511.5" y1="586.16" x2="800.5" y2="586.16" stroke="#e2e2e2" stroke-width="1" /><line x1="511.5" y1="546.68" x2="800.5" y2="546.68" stroke="#e2e2e2" stroke-width="1" /><line x1="511.5" y1="507.2" x2="800.5" y2="507.2" stroke="#e2e2e2" stroke-width="1" /><rect x="511.5" y="498.5" width="289.0" height="216.0" fill="none" stroke="#444" stroke-width="1" /><line x1="511.5" y1="714.5" x2="511.5" y2="711.5" stroke="#444" stroke-width="1" /><line x1="511.5" y1="498.5" x2="511.5" y2="501.5" stroke="#444" stroke-width="1" /><line x1="529.5625" y1="714.5" x2="529.5625" y2="713.0" stroke="#444" stroke-width="1" /><line x1="529.5625" y1="498.5" x2="529.5625" y2="500.0" stroke="#444" stroke-width="1" /><line x1="547.625" y1="714.5" x2="547.625" y2="713.0" stroke="#444" stroke-width="1" /><line x1="547.625" y1="498.5" x2="547.625" y2="500.0" stroke="#444" stroke-width="1" /><line x1="565.6875" y1="714.5" x2="565.6875" y2="713.0" stroke="#444" stroke-width="1" /><line x1="565.6875" y1="498.5" x2="565.6875" y2="500.0" stroke="#444" stroke-width="1" /><line x1="583.75" y1="714.5" x2="583.75" y2="711.5" stroke="#444" stroke-width="1" /><line x1="583.75" y1="498.5" x2="583.75" y2="501.5" stroke="#444" stroke-width="1" /><line x1="601.8125" y1="714.5" x2="601.8125" y2="713.0" stroke="#444" stroke-width="1" /><line x1="601.8125" y1="498.5" x2="601.8125" y2="500.0" stroke="#444" stroke-width="1" /><line x1="619.875" y1="714.5" x2="619.875" y2="713.0" stroke="#444" stroke-width="1" /><line x1="619.875" y1="498.5" x2="619.875" y2="500.0" stroke="#444" stroke-width="1" /><line x1="637.9375" y1="714.5" x2="637.9375" y2="713.0" stroke="#444" stroke-width="1" /><line x1="637.9375" y1="498.5" x2="637.9375" y2="500.0" stroke="#444" stroke-width="1" /><line x1="656.0" y1="714.5" x2="656.0" y2="711.5" stroke="#444" stroke-width="1" /><line x1="656.0" y1="498.5" x2="656.0" y2="501.5" stroke="#444" stroke-width="1" /><line x1="674.0625" y1="714.5" x2="674.0625" y2="713.0" stroke="#444" stroke-width="1" /><line x1="674.0625" y1="498.5" x2="674.0625" y2="500.0" stroke="#444" stroke-width="1" /><line x1="692.125" y1="714.5" x2="692.125" y2="713.0" stroke="#444" stroke-width="1" /><line x1="692.125" y1="498.5" x2="692.125" y2="500.0" stroke="#444" stroke-width="1" /><line x1="710.1875" y1="714.5" x2="710.1875" y2="713.0" stroke="#444" stroke-width="1" /><line x1="710.1875" y1="498.5" x2="710.1875" y2="500.0" stroke="#444" stroke-width="1" /><line x1="728.25" y1="714.5" x2="728.25" y2="711.5" stroke="#444" stroke-width="1" /><line x1="728.25" y1="498.5" x2="728.25" y2="501.5" stroke="#444" stroke-width="1" /><line x1="746.3125" y1="714.5" x2="746.3125" y2="713.0" stroke="#444" stroke-width="1" /><line x1="746.3125" y1="498.5" x2="746.3125" y2="500.0" stroke="#444" stroke-width="1" /><line x1="764.375" y1="714.5" x2="764.375" y2="713.0" stroke="#444" stroke-width="1" /><line x1="764.375" y1="498.5" x2="764.375" y2="500.0" stroke="#444" stroke-width="1" /><line x1="782.4375" y1="714.5" x2="782.4375" y2="713.0" stroke="#444" stroke-width="1" /><line x1="782.4375" y1="498.5" x2="782.4375" y2="500.0" stroke="#444" stroke-width="1" /><line x1="800.5" y1="714.5" x2="800.5" y2="711.5" stroke="#444" stroke-width="1" /><line x1="800.5" y1="498.5" x2="800.5" y2="501.5" stroke="#444" stroke-width="1" /><line x1="511.5" y1="704.6" x2="514.5" y2="704.6" stroke="#444" stroke-width="1" /><line x1="800.5" y1="704.6" x2="797.5" y2="704.6" stroke="#444" stroke-width="1" /><line x1="511.5" y1="684.86" x2="513.0" y2="684.86" stroke="#444" stroke-width="1" /><line x1="800.5" y1="684.86" x2="799.0" y2="684.86" stroke="#444" stroke-width="1" /><line x1="511.5" y1="665.12" x2="514.5" y2="665.12" stroke="#444" stroke-width="1" /><line x1="800.5" y1="665.12" x2="797.5" y2="665.12" stroke="#444" stroke-width="1" /><line x1="511.5" y1="645.38" x2="513.0" y2="645.38" stroke="#444" stroke-width="1" /><line x1="800.5" y1="645.38" x2="799.0" y2="645.38" stroke="#444" stroke-width="1" /><line x1="511.5" y1="625.64" x2="514.5" y2="625.64" stroke="#444" stroke-width="1" /><line x1="800.5" y1="625.64" x2="797.5" y2="625.64" stroke="#444" stroke-width="1" /><line x1="511.5" y1="605.9" x2="513.0" y2="605.9" stroke="#444" stroke-width="1" /><line x1="800.5" y1="605.9" x2="799.0" y2="605.9" stroke="#444" stroke-width="1" /><line x1="511.5" y1="586.16" x2="514.5" y2="586.16" stroke="#444" stroke-width="1" /><line x1="800.5" y1="586.16" x2="797.5" y2="586.16" stroke="#444" stroke-width="1" /><line x1="511.5" y1="566.42" x2="513.0" y2="566.42" stroke="#444" stroke-width="1" /><line x1="800.5" y1="566.42" x2="799.0" y2="566.42" stroke="#444" stroke-width="1" /><line x1="511.5" y1="546.68" x2="514.5" y2="546.68" stroke="#444" stroke-width="1" /><line x1="800.5" y1="546.68" x2="797.5" y2="546.68" stroke="#444" stroke-width="1" /><line x1="511.5" y1="526.94" x2="513.0" y2="526.94" stroke="#444" stroke-width="1" /><line x1="800.5" y1="526.94" x2="799.0" y2="526.94" stroke="#444" stroke-width="1" /><line x1="511.5" y1="507.2" x2="514.5" y2="507.2" stroke="#444" stroke-width="1" /><line x1="800.5" y1="507.2" x2="797.5" y2="507.2" stroke="#444" stroke-width="1" /><polyline points="511.50,704.60 512.95,699.34 514.39,694.22 515.84,689.24 517.28,684.39 518.73,679.67 520.17,675.08 521.62,670.61 523.06,666.25 524.50,662.02 525.95,657.89 527.39,653.88 528.84,649.97 530.28,646.17 531.73,642.46 533.17,638.86 534.62,635.35 536.07,631.94 537.51,628.62 538.96,625.38 540.40,622.23 541.85,619.17 543.29,616.19 544.74,613.28 546.18,610.46 547.62,607.71 549.07,605.03 550.51,602.42 551.96,599.89 553.40,597.42 554.85,595.01 556.29,592.68 557.74,590.40 559.18,588.18 560.63,586.03 562.08,583.93 563.52,581.88 564.97,579.89 566.41,577.96 567.86,576.07 569.30,574.24 570.75,572.45 572.19,570.71 573.63,569.02 575.08,567.37 576.52,565.77 577.97,564.21 579.41,562.69 580.86,561.21 582.30,559.77 583.75,558.37 585.20,557.01 586.64,555.68 588.09,554.39 589.53,553.14 590.98,551.91 592.42,550.72 593.87,549.56 595.31,548.43 596.75,547.33 598.20,546.27 599.64,545.22 601.09,544.21 602.53,543.23 603.98,542.27 605.42,541.33 606.87,540.42 608.32,539.54 609.76,538.68 611.21,537.84 612.65,537.02 614.10,536.23 615.54,535.45 616.99,534.70 618.43,533.97 619.88,533.26 621.32,532.56 622.76,531.89 624.21,531.23 625.65,530.59 627.10,529.97 628.54,529.36 629.99,528.77 631.43,528.19 632.88,527.63 634.33,527.09 635.77,526.56 637.22,526.04 638.66,525.54 640.11,525.05 641.55,524.58 643.00,524.12 644.44,523.66 645.88,523.23 647.33,522.80 648.77,522.38 650.22,521.98 651.66,521.59 653.11,521.20 654.56,520.83 656.00,520.47 657.44,520.11 658.89,519.77 660.34,519.43 661.78,519.11 663.23,518.79 664.67,518.48 666.12,518.18 667.56,517.89 669.00,517.60 670.45,517.33 671.89,517.06 673.34,516.79 674.78,516.54 676.23,516.29 677.67,516.05 679.12,515.81 680.57,515.58 682.01,515.36 683.45,515.14 684.90,514.93 686.35,514.73 687.79,514.52 689.24,514.33 690.68,514.14 692.12,513.95 693.57,513.77 695.01,513.60 696.46,513.43 697.90,513.26 699.35,513.10 700.80,512.94 702.24,512.79 703.68,512.64 705.13,512.50 706.58,512.36 708.02,512.22 709.47,512.09 710.91,511.96 712.36,511.83 713.80,511.71 715.25,511.59 716.69,511.47 718.13,511.35 719.58,511.24 721.02,511.14 722.47,511.03 723.91,510.93 725.36,510.83 726.81,510.73 728.25,510.64 729.69,510.55 731.14,510.46 732.59,510.37 734.03,510.29 735.48,510.20 736.92,510.12 738.37,510.05 739.81,509.97 741.25,509.90 742.70,509.83 744.14,509.76 745.59,509.69 747.03,509.62 748.48,509.56 749.92,509.49 751.37,509.43 752.82,509.37 754.26,509.32 755.70,509.26 757.15,509.20 758.60,509.15 760.04,509.10 761.49,509.05 762.93,509.00 764.38,508.95 765.82,508.90 767.26,508.86 768.71,508.81 770.15,508.77 771.60,508.73 773.05,508.69 774.49,508.65 775.93,508.61 777.38,508.57 778.83,508.54 780.27,508.50 781.72,508.47 783.16,508.43 784.61,508.40 786.05,508.37 787.50,508.34 788.94,508.31 790.38,508.28 791.83,508.25 793.27,508.22 794.72,508.19 796.16,508.17 797.61,508.14 799.06,508.12 800.50,508.09" fill="none" stroke="#3b8fd0" stroke-width="1.2"/><rect x="739.5" y="510.5" width="49" height="25" fill="#fff" stroke="#333" stroke-width="1" /><line x1="746" y1="522.5" x2="776" y2="522.5" stroke="#3b8fd0" stroke-width="1.2" /><rect x="1302" y="128" width="1" height="618" fill="#ffffff" /><rect x="1303" y="128" width="16" height="618" fill="#f0f0f0" /><path d="M1306.5,139.5 l3.75,-4.5 l3.75,4.5" fill="none" stroke="#555" stroke-width="2" /><path d="M1306.5,735.5 l3.75,4.5 l3.75,-4.5" fill="none" stroke="#555" stroke-width="2" /><rect x="1303" y="192" width="15" height="270" fill="#cdcdcd" /><rect x="1319" y="128" width="1" height="617" fill="#a0a0a0" /><rect x="1320" y="128" width="5" height="617" fill="#f5f5f5" /><rect x="1325" y="128" width="1" height="617" fill="#a0a0a0" /><rect x="1326" y="128" width="40" height="617" fill="#f0f0f0" /><rect x="1319" y="744" width="47" height="1" fill="#a0a0a0" /><rect x="1319" y="400" width="7" height="73" fill="#6e6e6e" /><path d="M1320.5,432 l4,3.5 l-4,3.5 z" fill="#fff" /><rect x="1345" y="142" width="2" height="2" fill="#555" /><rect x="1345" y="147" width="2" height="2" fill="#555" /><rect x="1345" y="152" width="2" height="2" fill="#555" /><rect x="1335" y="167" width="22" height="1" fill="#d8d8d8" /><rect x="1330.5" y="170.5" width="31" height="32" fill="#ececec" stroke="#c4c4c4" stroke-width="1" rx="3"/><rect x="1336.5" y="177.5" width="19" height="19" fill="#fff" stroke="#3a3a38" stroke-width="1.2" /><rect x="1337" y="178" width="18" height="3" fill="#6a6a6a" /><line x1="1339" y1="186.5" x2="1353" y2="186.5" stroke="#3a3a38" stroke-width="1" /><line x1="1339" y1="190.5" x2="1353" y2="190.5" stroke="#3a3a38" stroke-width="1" /><circle cx="1348" cy="186.5" r="1.6" fill="#1e78c8"/><circle cx="1344" cy="190.5" r="1.6" fill="#fff" stroke="#1e78c8"/><path d="M1338.5,213.5 h10 l5,5 v14 h-15 z" fill="#fff" stroke="#3a3a38" stroke-width="1.1" /><path d="M1348.5,213.5 v5 h5" fill="none" stroke="#3a3a38" stroke-width="1" /><path d="M1336.5,262.8 L1342.5,247.2 L1348,261 M1338.8,257.2 h6" fill="none" stroke="#3a3a38" stroke-width="1.4" /><path d="M1349.2,261.2 l6,-7 a1.3,1.3 0 0 1 2,1.6 l-6,7 z" fill="#fff" stroke="#3a3a38" stroke-width="1.1" /><ellipse cx="1345.8" cy="265.2" rx="4.3" ry="2.3" transform="rotate(-25 1345.8 265.2)" fill="#fff" stroke="#1e78c8" stroke-width="1.3"/><path d="M1335.5,299.5 v-17 h6 l2.5,2.5 h10 v3" fill="#fff" stroke="#e8892b" stroke-width="1.2" /><path d="M1335.5,299.5 l2,-11 h20 l-2,11 z" fill="#f8d98c" stroke="#e8892b" stroke-width="1.2" /><rect x="1343.5" y="289.5" width="13" height="12" fill="#fff" stroke="#3a3a38" stroke-width="1.2" /><circle cx="1346.8" cy="292.6" r="1.5" fill="#f39a3a"/><path d="M1344,301 l4,-3.5 l2,1.5 l3,-3 l3,3 v2 z" fill="#83beec" stroke="#1e78c8" stroke-width="0.6" /><circle cx="1346" cy="327" r="9.5" fill="#fff" stroke="#3a3a38" stroke-width="1.1"/><path d="M1351,322 l-3,7 l-7,3 l3,-7 z" fill="#1e78c8" /><rect x="0" y="746" width="1366" height="1" fill="#a0a0a0" /><rect x="0" y="747" width="1366" height="19" fill="#f0f0f0" /><rect x="0" y="766" width="48" height="2" fill="#3a3a3a" /><rect x="48" y="766" width="344" height="2" fill="#d8d8d8" /><rect x="392" y="766" width="974" height="2" fill="#3a3a3a" /><rect x="160" y="750" width="1" height="16" fill="#b0b0b0" /><rect x="337" y="750" width="1" height="16" fill="#b0b0b0" /><rect x="521" y="750" width="1" height="16" fill="#b0b0b0" /><rect x="661" y="750" width="1" height="16" fill="#b0b0b0" /><rect x="730" y="750" width="1" height="16" fill="#b0b0b0" /><rect x="760" y="750" width="1" height="16" fill="#b0b0b0" /><rect x="790" y="750" width="1" height="16" fill="#b0b0b0" /><rect x="820" y="750" width="1" height="16" fill="#b0b0b0" /><rect x="1098" y="750" width="1" height="16" fill="#b0b0b0" /><rect x="1175" y="750" width="1" height="16" fill="#b0b0b0" /><rect x="1319" y="750" width="1" height="16" fill="#b0b0b0" /><rect x="738.5" y="755.5" width="8" height="5" fill="#fff" stroke="#555" stroke-width="1" /><path d="M750,753.5 h4 M752,753.5 v9 M750,762.5 h4" fill="none" stroke="#555" stroke-width="1" /><rect x="772.5" y="753.5" width="10" height="9" fill="#fff" stroke="#e03c3c" stroke-width="1" /><rect x="774.5" y="753.5" width="6" height="3" fill="none" stroke="#e03c3c" stroke-width="1" /><path d="M834.5,755.5 h10 v6 h-10 z M831,755.5 h3 M834.5,752 v3" fill="none" stroke="#555" stroke-width="1" /><line x1="831.5" y1="752" x2="831.5" y2="758" stroke="#1e78c8" stroke-width="1" /><line x1="829" y1="754.5" x2="835" y2="754.5" stroke="#1e78c8" stroke-width="1" /><path d="M971.5,752.5 v10 M971.5,755.5 h10 v6 h-10" fill="none" stroke="#555" stroke-width="1" /><line x1="966" y1="758.5" x2="972" y2="758.5" stroke="#1e78c8" stroke-width="1" /><line x1="967.5" y1="756" x2="967.5" y2="761" stroke="#1e78c8" stroke-width="1" /><path d="M1110.5,752.5 h5 l2,2 v9 h-7 z" fill="#fff" stroke="#1e78c8" stroke-width="1" /><rect x="1124.5" y="752.5" width="7" height="10" fill="#fff" stroke="#555" stroke-width="1" /><rect x="1132.5" y="752.5" width="7" height="10" fill="#fff" stroke="#555" stroke-width="1" /><path d="M1148.5,754.5 q4,-2 8,0 v8 q-4,-2 -8,0 z M1156.5,754.5 q4,-2 8,0 v8 q-4,-2 -8,0 z" fill="#fff" stroke="#555" stroke-width="1" /><line x1="1185" y1="758.5" x2="1195" y2="758.5" stroke="#555" stroke-width="1.4" /><line x1="1200" y1="758.5" x2="1297" y2="758.5" stroke="#777" stroke-width="1.4" /><rect x="1217" y="756" width="1.5" height="5" fill="#777" /><rect x="1246.5" y="753.5" width="4" height="10" fill="#e8e8e8" stroke="#666" stroke-width="1" /><path d="M1302,758.5 h10 M1307,753.5 v10" fill="none" stroke="#555" stroke-width="1.6" /></svg>
<div style="position:absolute;left:24px;top:5px;font-size:12px;color:#000;font-weight:normal;font-family:"Liberation Sans", sans-serif;white-space:nowrap;line-height:1;">無題 1 - LibreOffice Writer</div><div style="position:absolute;left:8px;top:30px;font-size:12px;color:#000;font-weight:normal;font-family:"Liberation Sans", sans-serif;white-space:nowrap;line-height:1;">ファイル(<u>F</u>)</div><div style="position:absolute;left:72px;top:30px;font-size:12px;color:#000;font-weight:normal;font-family:"Liberation Sans", sans-serif;white-space:nowrap;line-height:1;">編集(<u>E</u>)</div><div style="position:absolute;left:126px;top:30px;font-size:12px;color:#000;font-weight:normal;font-family:"Liberation Sans", sans-serif;white-space:nowrap;line-height:1;">表示(<u>V</u>)</div><div style="position:absolute;left:181px;top:30px;font-size:12px;color:#000;font-weight:normal;font-family:"Liberation Sans", sans-serif;white-space:nowrap;line-height:1;">挿入(<u>I</u>)</div><div style="position:absolute;left:232px;top:30px;font-size:12px;color:#000;font-weight:normal;font-family:"Liberation Sans", sans-serif;white-space:nowrap;line-height:1;">書式(<u>O</u>)</div><div style="position:absolute;left:289px;top:30px;font-size:12px;color:#000;font-weight:normal;font-family:"Liberation Sans", sans-serif;white-space:nowrap;line-height:1;">スタイル(<u>Y</u>)</div><div style="position:absolute;left:357px;top:30px;font-size:12px;color:#000;font-weight:normal;font-family:"Liberation Sans", sans-serif;white-space:nowrap;line-height:1;">表(<u>A</u>)</div><div style="position:absolute;left:400px;top:30px;font-size:12px;color:#000;font-weight:normal;font-family:"Liberation Sans", sans-serif;white-space:nowrap;line-height:1;">フォーム(<u>R</u>)</div><div style="position:absolute;left:464px;top:30px;font-size:12px;color:#000;font-weight:normal;font-family:"Liberation Sans", sans-serif;white-space:nowrap;line-height:1;">ツール(<u>T</u>)</div><div style="position:absolute;left:521px;top:30px;font-size:12px;color:#000;font-weight:normal;font-family:"Liberation Sans", sans-serif;white-space:nowrap;line-height:1;">ウィンドウ(<u>W</u>)</div><div style="position:absolute;left:598px;top:30px;font-size:12px;color:#000;font-weight:normal;font-family:"Liberation Sans", sans-serif;white-space:nowrap;line-height:1;">ヘルプ(<u>H</u>)</div><div style="position:absolute;left:530.5px;top:59.5px;font-size:11px;color:#1e78c8;font-weight:normal;font-family:"Liberation Sans", sans-serif;white-space:nowrap;line-height:1;">a</div><div style="position:absolute;left:535px;top:68.5px;font-size:12px;color:#3a3a38;font-weight:normal;font-family:"Liberation Sans", sans-serif;white-space:nowrap;line-height:1;">d</div><div style="position:absolute;left:552px;top:57.5px;font-size:12px;color:#444;font-weight:normal;font-family:"Liberation Sans", sans-serif;white-space:nowrap;line-height:1;">abc</div><div style="position:absolute;left:739px;top:62px;font-size:14px;color:#1e78c8;font-weight:normal;font-family:"Liberation Sans", sans-serif;white-space:nowrap;line-height:1;">A</div><div style="position:absolute;left:954px;top:70px;font-size:10px;color:#b9b9b9;font-weight:normal;font-family:"Liberation Sans", sans-serif;white-space:nowrap;line-height:1;">1</div><div style="position:absolute;left:865px;top:102px;font-size:12px;color:#000;font-weight:normal;font-family:"Liberation Sans", sans-serif;white-space:nowrap;line-height:1;">標準</div><div style="position:absolute;left:1191px;top:103px;font-size:11px;color:#000;font-weight:normal;font-family:"Liberation Sans", sans-serif;white-space:nowrap;line-height:1;">0%</div><div style="position:absolute;left:248.9px;top:134px;width:14px;text-align:center;font-size:9px;color:#555;font-family:'Liberation Sans',sans-serif;line-height:10px">1</div><div style="position:absolute;left:332.1px;top:134px;width:14px;text-align:center;font-size:9px;color:#555;font-family:'Liberation Sans',sans-serif;line-height:10px">1</div><div style="position:absolute;left:373.7px;top:134px;width:14px;text-align:center;font-size:9px;color:#555;font-family:'Liberation Sans',sans-serif;line-height:10px">2</div><div style="position:absolute;left:415.2px;top:134px;width:14px;text-align:center;font-size:9px;color:#555;font-family:'Liberation Sans',sans-serif;line-height:10px">3</div><div style="position:absolute;left:456.8px;top:134px;width:14px;text-align:center;font-size:9px;color:#555;font-family:'Liberation Sans',sans-serif;line-height:10px">4</div><div style="position:absolute;left:498.4px;top:134px;width:14px;text-align:center;font-size:9px;color:#555;font-family:'Liberation Sans',sans-serif;line-height:10px">5</div><div style="position:absolute;left:540.0px;top:134px;width:14px;text-align:center;font-size:9px;color:#555;font-family:'Liberation Sans',sans-serif;line-height:10px">6</div><div style="position:absolute;left:581.6px;top:134px;width:14px;text-align:center;font-size:9px;color:#555;font-family:'Liberation Sans',sans-serif;line-height:10px">7</div><div style="position:absolute;left:623.1px;top:134px;width:14px;text-align:center;font-size:9px;color:#555;font-family:'Liberation Sans',sans-serif;line-height:10px">8</div><div style="position:absolute;left:664.7px;top:134px;width:14px;text-align:center;font-size:9px;color:#555;font-family:'Liberation Sans',sans-serif;line-height:10px">9</div><div style="position:absolute;left:706.3px;top:134px;width:14px;text-align:center;font-size:9px;color:#555;font-family:'Liberation Sans',sans-serif;line-height:10px">10</div><div style="position:absolute;left:747.9px;top:134px;width:14px;text-align:center;font-size:9px;color:#555;font-family:'Liberation Sans',sans-serif;line-height:10px">11</div><div style="position:absolute;left:789.5px;top:134px;width:14px;text-align:center;font-size:9px;color:#555;font-family:'Liberation Sans',sans-serif;line-height:10px">12</div><div style="position:absolute;left:831.0px;top:134px;width:14px;text-align:center;font-size:9px;color:#555;font-family:'Liberation Sans',sans-serif;line-height:10px">13</div><div style="position:absolute;left:872.6px;top:134px;width:14px;text-align:center;font-size:9px;color:#555;font-family:'Liberation Sans',sans-serif;line-height:10px">14</div><div style="position:absolute;left:914.2px;top:134px;width:14px;text-align:center;font-size:9px;color:#555;font-family:'Liberation Sans',sans-serif;line-height:10px">15</div><div style="position:absolute;left:955.8px;top:134px;width:14px;text-align:center;font-size:9px;color:#555;font-family:'Liberation Sans',sans-serif;line-height:10px">16</div><div style="position:absolute;left:997.4px;top:134px;width:14px;text-align:center;font-size:9px;color:#555;font-family:'Liberation Sans',sans-serif;line-height:10px">17</div><div style="position:absolute;left:1038.9px;top:134px;width:14px;text-align:center;font-size:9px;color:#555;font-family:'Liberation Sans',sans-serif;line-height:10px">18</div><div style="position:absolute;left:12px;top:752px;font-size:12px;color:#000;font-weight:normal;font-family:"Liberation Sans", sans-serif;white-space:nowrap;line-height:1;">ページ 1 / 1</div><div style="position:absolute;left:170px;top:752px;font-size:12px;color:#000;font-weight:normal;font-family:"Liberation Sans", sans-serif;white-space:nowrap;line-height:1;">0 単語, 0 文字</div><div style="position:absolute;left:347px;top:752px;font-size:12px;color:#000;font-weight:normal;font-family:"Liberation Sans", sans-serif;white-space:nowrap;line-height:1;">標準ページスタイル</div><div style="position:absolute;left:851px;top:752px;font-size:12px;color:#000;font-weight:normal;font-family:"Liberation Sans", sans-serif;white-space:nowrap;line-height:1;">0.00 / 0.00</div><div style="position:absolute;left:987px;top:752px;font-size:12px;color:#000;font-weight:normal;font-family:"Liberation Sans", sans-serif;white-space:nowrap;line-height:1;">6.69 x 8.66</div><div style="position:absolute;left:1328px;top:752px;font-size:12px;color:#000;font-weight:normal;font-family:"Liberation Sans", sans-serif;white-space:nowrap;line-height:1;">110%</div>
<div style="position:absolute;left:213px;top:153px;width:875px;height:593px;overflow:hidden"><div style="position:absolute;left:-213px;top:-153px;width:1366px;height:768px"><div style="position:absolute;left:560px;top:471px;width:192px;text-align:center;font-size:13px;font-weight:bold;color:#262626;font-family:'Liberation Sans',sans-serif;line-height:14px">Step Response</div><div style="position:absolute;left:501.5px;top:722.5px;width:20px;text-align:center;font-size:12px;color:#404040;font-family:'Liberation Sans',sans-serif;line-height:12px">0</div><div style="position:absolute;left:573.8px;top:722.5px;width:20px;text-align:center;font-size:12px;color:#404040;font-family:'Liberation Sans',sans-serif;line-height:12px">1</div><div style="position:absolute;left:646.0px;top:722.5px;width:20px;text-align:center;font-size:12px;color:#404040;font-family:'Liberation Sans',sans-serif;line-height:12px">2</div><div style="position:absolute;left:718.2px;top:722.5px;width:20px;text-align:center;font-size:12px;color:#404040;font-family:'Liberation Sans',sans-serif;line-height:12px">3</div><div style="position:absolute;left:790.5px;top:722.5px;width:20px;text-align:center;font-size:12px;color:#404040;font-family:'Liberation Sans',sans-serif;line-height:12px">4</div><div style="position:absolute;left:469.5px;top:699.4px;width:36px;text-align:right;font-size:12px;color:#404040;font-family:'Liberation Sans',sans-serif;line-height:12px">0</div><div style="position:absolute;left:469.5px;top:659.9px;width:36px;text-align:right;font-size:12px;color:#404040;font-family:'Liberation Sans',sans-serif;line-height:12px">0.1</div><div style="position:absolute;left:469.5px;top:620.4px;width:36px;text-align:right;font-size:12px;color:#404040;font-family:'Liberation Sans',sans-serif;line-height:12px">0.2</div><div style="position:absolute;left:469.5px;top:581.0px;width:36px;text-align:right;font-size:12px;color:#404040;font-family:'Liberation Sans',sans-serif;line-height:12px">0.3</div><div style="position:absolute;left:469.5px;top:541.5px;width:36px;text-align:right;font-size:12px;color:#404040;font-family:'Liberation Sans',sans-serif;line-height:12px">0.4</div><div style="position:absolute;left:469.5px;top:502.0px;width:36px;text-align:right;font-size:12px;color:#404040;font-family:'Liberation Sans',sans-serif;line-height:12px">0.5</div><div style="position:absolute;left:468px;top:600px;width:18px;height:14px;font-size:12px;color:#404040;font-family:'Liberation Sans',sans-serif;line-height:14px;transform:rotate(-90deg);text-align:center">y1</div><div style="position:absolute;left:616px;top:737px;width:80px;text-align:center;font-size:12px;color:#404040;font-family:'Liberation Sans',sans-serif;line-height:12px">Time [s]</div></div></div>
</body></html>
